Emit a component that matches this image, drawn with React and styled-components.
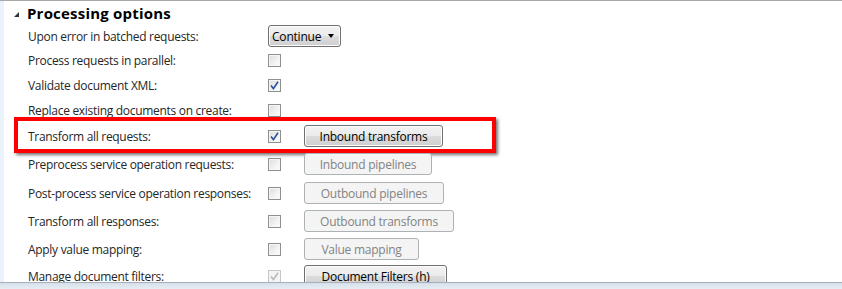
import React from 'react';
import styled, { createGlobalStyle } from 'styled-components';

const GlobalStyle = createGlobalStyle`
  html, body {
    margin: 0;
    padding: 0;
    background: #ffffff;
  }
  body {
    font-family: 'Open Sans', 'Noto Sans', 'Liberation Sans', sans-serif;
    font-size: 12px;
    color: #262626;
  }
`;

const rows = [
  { label: 'Upon error in batched requests:', height: 24, control: 'combo' },
  { label: 'Process requests in parallel:', height: 25, checked: false },
  { label: 'Validate document XML:', height: 25, checked: true },
  { label: 'Replace existing documents on create:', height: 25, checked: false },
  {
    label: 'Transform all requests:',
    height: 26,
    checked: true,
    button: 'Inbound transforms',
    width: 139,
    enabled: true,
    highlight: true,
  },
  { label: 'Preprocess service operation requests:', height: 30, checked: false, button: 'Inbound pipelines', width: 128 },
  { label: 'Post-process service operation responses:', height: 28, checked: false, button: 'Outbound pipelines', width: 140 },
  { label: 'Transform all responses:', height: 28, checked: false, button: 'Outbound transforms', width: 150 },
  { label: 'Apply value mapping:', height: 28, checked: false, button: 'Value mapping', width: 115 },
  {
    label: 'Manage document filters:',
    height: 26,
    checked: true,
    disabledCheck: true,
    button: 'Document Filters (h)',
    width: 143,
    enabled: true,
  },
];

function CheckMark({ color }) {
  return (
    <svg width='9' height='9' viewBox='0 0 9 9'>
      <path d='M1 4.6 L3.4 7.6 L8 0.8' fill='none' stroke={color} strokeWidth='1.6' />
    </svg>
  );
}

function App() {
  return (
    <>
      <GlobalStyle />
      <Page>
        <Body>
          <LeftStrip />
          <Main>
            <Header>
              <Expander />
              <HeaderText>Processing options</HeaderText>
            </Header>

            {rows.map((row) => (
              <Row key={row.label} h={row.height}>
                {row.highlight && <Highlight />}
                <Label>{row.label}</Label>
                {row.control === 'combo' ? (
                  <Combo>
                    <span>Continue</span>
                    <Arrow />
                  </Combo>
                ) : (
                  <>
                    <Check disabled={row.disabledCheck}>
                      {row.checked && (
                        <CheckMark color={row.disabledCheck ? '#b9b9b9' : '#2b4f9e'} />
                      )}
                    </Check>
                    {row.button && (
                      <Button w={row.width} enabled={row.enabled}>
                        {row.button}
                      </Button>
                    )}
                  </>
                )}
              </Row>
            ))}
          </Main>
        </Body>
        <BottomBar />
      </Page>
    </>
  );
}

export default App;

const Page = styled.div`
  width: 842px;
  height: 289px;
  display: flex;
  flex-direction: column;
  overflow: hidden;
  border-top: 1px solid #a8a8a8;
  box-sizing: border-box;
`;

const Body = styled.div`
  flex: 1;
  display: flex;
  min-height: 0;
  overflow: hidden;
`;

const LeftStrip = styled.div`
  width: 4px;
  background: #eaf2fb;
`;

const Main = styled.div`
  flex: 1;
  display: flex;
  flex-direction: column;
`;

const Header = styled.div`
  height: 23px;
  flex-shrink: 0;
  display: flex;
  align-items: center;
  padding-left: 10px;
  gap: 8px;
`;

const Expander = styled.div`
  width: 0;
  height: 0;
  border-left: 5px solid transparent;
  border-bottom: 5px solid #333333;
  margin-top: 3px;
`;

const HeaderText = styled.div`
  font-weight: 700;
  font-size: 15px;
  color: #000000;
  letter-spacing: 0.2px;
`;

const Row = styled.div`
  position: relative;
  height: ${(p) => p.h}px;
  display: grid;
  grid-template-columns: 240px 36px auto;
  align-items: center;
  padding-left: 24px;
  flex-shrink: 0;
`;

const Highlight = styled.div`
  position: absolute;
  left: 10px;
  top: -6px;
  width: 482px;
  height: 36px;
  border: 4px solid #ff0000;
  box-sizing: border-box;
  box-shadow: 2px 2px 3px rgba(0, 0, 0, 0.55);
  pointer-events: none;
`;

const Label = styled.div`
  white-space: nowrap;
  color: #262626;
  font-size: 12px;
  letter-spacing: -0.3px;
`;

const Check = styled.div`
  width: 13px;
  height: 13px;
  box-sizing: border-box;
  border: 1px solid ${(p) => (p.disabled ? '#c6c6c6' : '#8e8f8f')};
  background: ${(p) =>
    p.disabled
      ? '#f4f4f4'
      : 'linear-gradient(135deg, #dcdcdc 0%, #f2f2f2 60%, #ffffff 100%)'};
  box-shadow: inset 0 0 0 1px ${(p) => (p.disabled ? '#f4f4f4' : '#f6f6f6')};
  display: flex;
  align-items: center;
  justify-content: center;
`;

const Button = styled.div`
  width: ${(p) => p.w}px;
  height: 22px;
  box-sizing: border-box;
  border: 1px solid ${(p) => (p.enabled ? '#707070' : '#adb2b5')};
  border-radius: 3px;
  background: ${(p) =>
    p.enabled
      ? 'linear-gradient(#f2f2f2 0%, #ebebeb 50%, #dddddd 51%, #cfcfcf 100%)'
      : '#f4f4f4'};
  box-shadow: inset 0 0 0 1px ${(p) => (p.enabled ? '#fcfcfc' : '#f4f4f4')};
  color: ${(p) => (p.enabled ? '#000000' : '#838383')};
  display: flex;
  align-items: center;
  justify-content: center;
  font-size: 12px;
  letter-spacing: -0.25px;
  white-space: nowrap;
`;

const Combo = styled.div`
  width: 73px;
  height: 22px;
  box-sizing: border-box;
  border: 1px solid #707070;
  border-radius: 3px;
  background: linear-gradient(#f2f2f2 0%, #ebebeb 50%, #dddddd 51%, #cfcfcf 100%);
  box-shadow: inset 0 0 0 1px #fcfcfc;
  display: flex;
  align-items: center;
  justify-content: space-between;
  padding: 0 6px 0 3px;
  color: #000000;
  font-size: 12px;
  letter-spacing: -0.2px;
`;

const Arrow = styled.div`
  width: 0;
  height: 0;
  border-left: 3.5px solid transparent;
  border-right: 3.5px solid transparent;
  border-top: 4px solid #000000;
`;

const BottomBar = styled.div`
  height: 6px;
  flex-shrink: 0;
  border-top: 1px solid #a7b0ba;
  background: linear-gradient(#d6e0ea, #e6edf4);
`;
